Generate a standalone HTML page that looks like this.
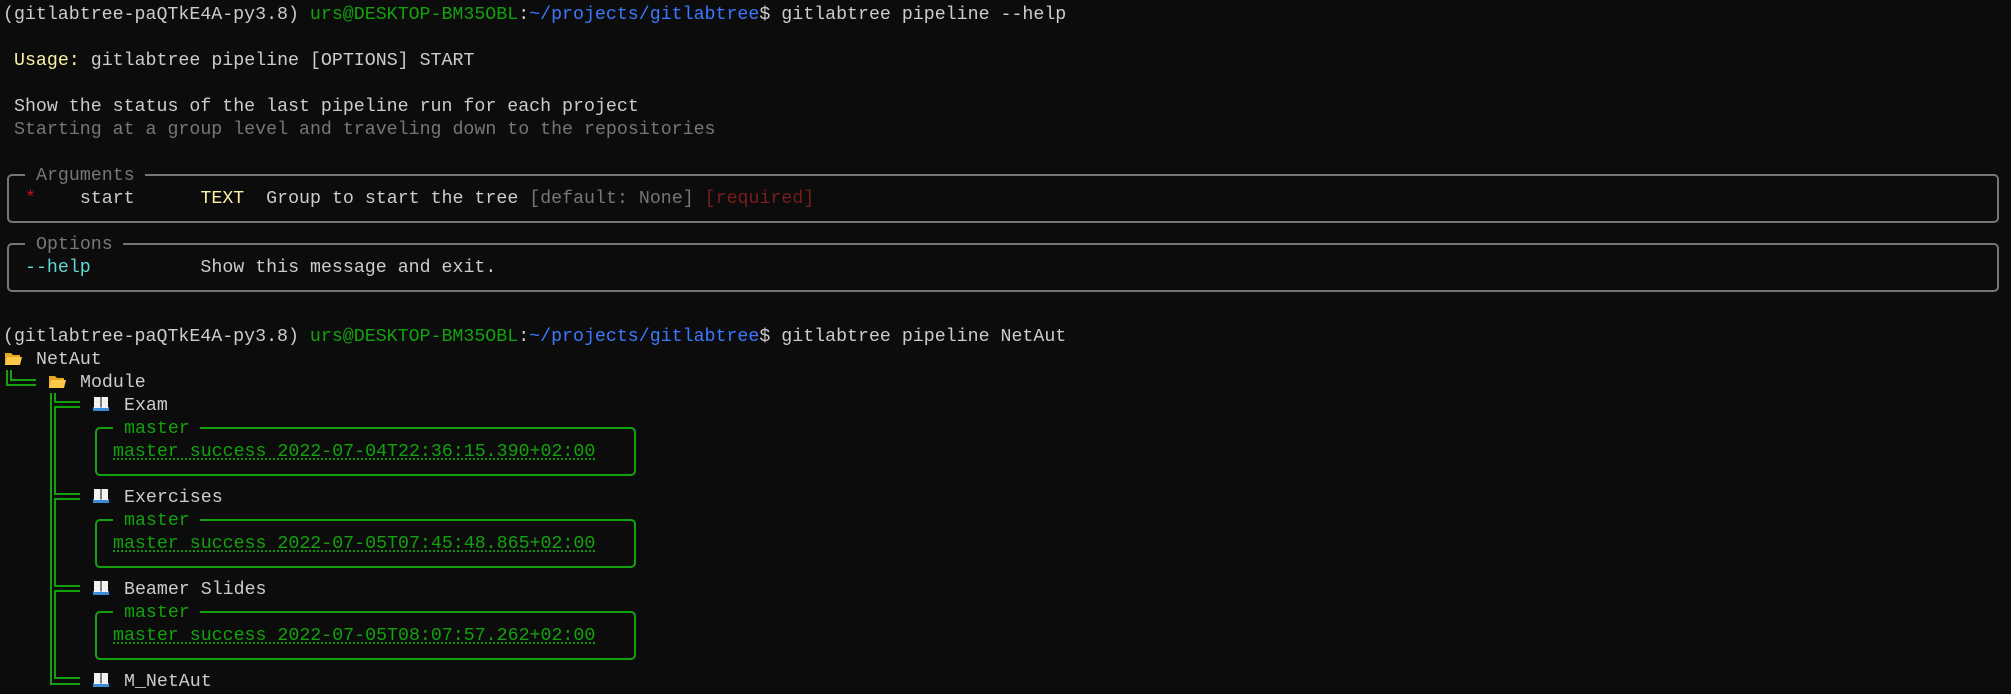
<!DOCTYPE html>
<html><head><meta charset="utf-8">
<style>
html,body{margin:0;padding:0;background:#0c0c0c;width:2011px;height:694px;overflow:hidden;position:relative}
.r{position:absolute;white-space:pre;font-family:"Liberation Mono","DejaVu Sans Mono",monospace;font-size:18.28px;line-height:23px;height:23px;color:#cccccc;margin-top:2px}
.g{color:#13a10e}.b{color:#3b78ff}.y{color:#f9f1a5}.d{color:#767676}.red{color:#c50f1f}.dr{color:#7a1c1c}.c{color:#61d6d6}
.box{position:absolute;box-sizing:border-box;border:2px solid #767676;border-radius:5px}
.gb{border-color:#13a10e}
.lbl{position:absolute;background:#0c0c0c;height:6px}
.v{position:absolute;background:#13a10e;width:2px}
.h{position:absolute;background:#13a10e;height:2px}
.u{text-decoration:underline dotted;text-underline-offset:3px}
svg{position:absolute}
</style></head><body>

<div class="box" style="left:7px;top:174px;width:1992px;height:49px"></div>
<div class="lbl" style="left:25px;top:172px;width:120px"></div>
<div class="box" style="left:7px;top:243px;width:1992px;height:49px"></div>
<div class="lbl" style="left:25px;top:241px;width:98px"></div>

<div class="box gb" style="left:95px;top:427px;width:541px;height:49px"></div>
<div class="lbl" style="left:113px;top:425px;width:87px"></div>
<div class="box gb" style="left:95px;top:519px;width:541px;height:49px"></div>
<div class="lbl" style="left:113px;top:517px;width:87px"></div>
<div class="box gb" style="left:95px;top:611px;width:541px;height:49px"></div>
<div class="lbl" style="left:113px;top:609px;width:87px"></div>

<div class="v" style="left:6px;top:370px;height:16px"></div>
<div class="v" style="left:10px;top:370px;height:11px"></div>
<div class="h" style="left:6px;top:384px;width:30px"></div>
<div class="h" style="left:10px;top:379px;width:26px"></div>

<div class="v" style="left:50px;top:393px;height:292px"></div>
<div class="v" style="left:54px;top:393px;height:10px"></div>
<div class="v" style="left:54px;top:408px;height:87px"></div>
<div class="v" style="left:54px;top:500px;height:87px"></div>
<div class="v" style="left:54px;top:592px;height:87px"></div>
<div class="h" style="left:54px;top:401px;width:26px"></div>
<div class="h" style="left:54px;top:406px;width:26px"></div>
<div class="h" style="left:54px;top:493px;width:26px"></div>
<div class="h" style="left:54px;top:498px;width:26px"></div>
<div class="h" style="left:54px;top:585px;width:26px"></div>
<div class="h" style="left:54px;top:590px;width:26px"></div>
<div class="h" style="left:54px;top:677px;width:26px"></div>
<div class="h" style="left:50px;top:683px;width:30px"></div>

<svg style="left:5px;top:351px" width="17" height="15" viewBox="0 0 17 15"><path d="M0 2h6l2 2h7v10H0z" fill="#e8a61c"/><path d="M2 6h15l-2 8H0z" fill="#fcc94a"/></svg>
<svg style="left:49px;top:374px" width="17" height="15" viewBox="0 0 17 15"><path d="M0 2h6l2 2h7v10H0z" fill="#e8a61c"/><path d="M2 6h15l-2 8H0z" fill="#fcc94a"/></svg>
<svg style="left:93px;top:397px" width="16" height="14" viewBox="0 0 16 14"><rect x="0" y="10" width="16" height="4" fill="#3b8ddb"/><rect x="1" y="0" width="6.5" height="11" fill="#f2f2f2"/><rect x="8.5" y="0" width="6.5" height="11" fill="#f2f2f2"/></svg>
<svg style="left:93px;top:489px" width="16" height="14" viewBox="0 0 16 14"><rect x="0" y="10" width="16" height="4" fill="#3b8ddb"/><rect x="1" y="0" width="6.5" height="11" fill="#f2f2f2"/><rect x="8.5" y="0" width="6.5" height="11" fill="#f2f2f2"/></svg>
<svg style="left:93px;top:581px" width="16" height="14" viewBox="0 0 16 14"><rect x="0" y="10" width="16" height="4" fill="#3b8ddb"/><rect x="1" y="0" width="6.5" height="11" fill="#f2f2f2"/><rect x="8.5" y="0" width="6.5" height="11" fill="#f2f2f2"/></svg>
<svg style="left:93px;top:673px" width="16" height="14" viewBox="0 0 16 14"><rect x="0" y="10" width="16" height="4" fill="#3b8ddb"/><rect x="1" y="0" width="6.5" height="11" fill="#f2f2f2"/><rect x="8.5" y="0" width="6.5" height="11" fill="#f2f2f2"/></svg>

<div class="r" style="left:3px;top:1.5px">(gitlabtree-paQTkE4A-py3.8) <span class="g">urs@DESKTOP-BM35OBL</span>:<span class="b">~/projects/gitlabtree</span>$ gitlabtree pipeline --help</div>
<div class="r" style="left:14px;top:47.5px"><span class="y">Usage:</span> gitlabtree pipeline [OPTIONS] START</div>
<div class="r" style="left:14px;top:93.5px">Show the status of the last pipeline run for each project</div>
<div class="r d" style="left:14px;top:116.5px">Starting at a group level and traveling down to the repositories</div>
<div class="r d" style="left:36px;top:162.5px">Arguments</div>
<div class="r" style="left:25px;top:185.5px"><span class="red">*</span>    start      <span class="y">TEXT</span>  Group to start the tree <span class="d">[default: None]</span> <span class="dr">[required]</span></div>
<div class="r d" style="left:36px;top:231.5px">Options</div>
<div class="r" style="left:25px;top:254.5px"><span class="c">--help</span>          Show this message and exit.</div>
<div class="r" style="left:3px;top:323.5px">(gitlabtree-paQTkE4A-py3.8) <span class="g">urs@DESKTOP-BM35OBL</span>:<span class="b">~/projects/gitlabtree</span>$ gitlabtree pipeline NetAut</div>
<div class="r" style="left:36px;top:346.5px">NetAut</div>
<div class="r" style="left:80px;top:369.5px">Module</div>
<div class="r" style="left:124px;top:392.5px">Exam</div>
<div class="r g" style="left:124px;top:415.5px">master</div>
<div class="r g" style="left:113px;top:438.5px"><span class="u">master success 2022-07-04T22:36:15.390+02:00</span></div>
<div class="r" style="left:124px;top:484.5px">Exercises</div>
<div class="r g" style="left:124px;top:507.5px">master</div>
<div class="r g" style="left:113px;top:530.5px"><span class="u">master success 2022-07-05T07:45:48.865+02:00</span></div>
<div class="r" style="left:124px;top:576.5px">Beamer Slides</div>
<div class="r g" style="left:124px;top:599.5px">master</div>
<div class="r g" style="left:113px;top:622.5px"><span class="u">master success 2022-07-05T08:07:57.262+02:00</span></div>
<div class="r" style="left:124px;top:668.5px">M_NetAut</div>
</body></html>
